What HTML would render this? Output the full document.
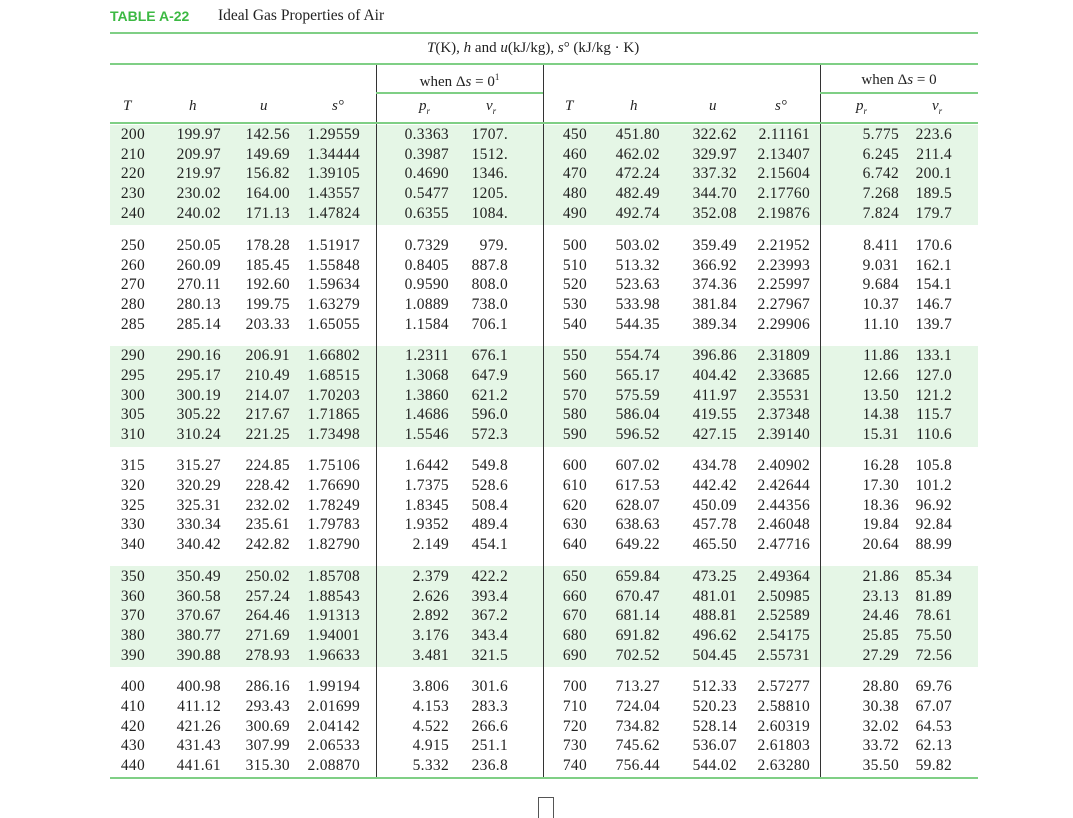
<!DOCTYPE html>
<html><head><meta charset="utf-8"><style>
body{margin:0;width:1073px;height:815px;background:#fff;position:relative;overflow:hidden;font-family:"Liberation Serif",serif;color:#222}
.abs{position:absolute}
.hl{position:absolute;height:2px;background:#7fcf85}
.vl{position:absolute;width:1px;background:#333;top:65px;height:714px}
.band{position:absolute;left:110px;width:868px;background:#e5f6e6}
.r{position:absolute;left:0;width:1073px;height:20px;font-size:15.5px;line-height:20px;letter-spacing:0.3px}
.r span{position:absolute;text-align:right;width:90px}
.h{font-style:italic;font-size:15px;position:absolute;top:98px}
</style></head><body>
<div class="abs" style="left:110px;top:8px;font-family:'Liberation Sans',sans-serif;font-weight:bold;color:#3cb943;font-size:14px;">TABLE A-22</div>
<div class="abs" style="left:218px;top:7px;font-size:15.5px;">Ideal Gas Properties of Air</div>
<div class="hl" style="left:110px;width:868px;top:32px"></div>
<div class="abs" style="left:427px;top:40px;font-size:15px;"><i>T</i>(K), <i>h</i> and <i>u</i>(kJ/kg), <i>s</i>° (kJ/kg · K)</div>
<div class="hl" style="left:110px;width:868px;top:63px"></div>
<div class="band" style="top:125px;height:100px"></div>
<div class="band" style="top:346px;height:101px"></div>
<div class="band" style="top:566px;height:101px"></div>
<div class="vl" style="left:376px"></div>
<div class="vl" style="left:543px"></div>
<div class="vl" style="left:820px"></div>
<div class="abs" style="left:376px;width:167px;text-align:center;top:72px;font-size:15px">when Δ<i>s</i> = 0<sup style="font-size:9px">1</sup></div>
<div class="abs" style="left:820px;width:158px;text-align:center;top:72px;font-size:15px">when Δ<i>s</i> = 0</div>
<div class="hl" style="left:376px;width:167px;top:92px"></div>
<div class="hl" style="left:820px;width:158px;top:92px"></div>
<div class="h" style="left:123px">T</div><div class="h" style="left:189px">h</div><div class="h" style="left:260px">u</div><div class="h" style="left:332px">s°</div>
<div class="h" style="left:419px">p<sub style="font-size:9px">r</sub></div><div class="h" style="left:486px">v<sub style="font-size:9px">r</sub></div>
<div class="h" style="left:565px">T</div><div class="h" style="left:630px">h</div><div class="h" style="left:709px">u</div><div class="h" style="left:775px">s°</div>
<div class="h" style="left:856px">p<sub style="font-size:9px">r</sub></div><div class="h" style="left:932px">v<sub style="font-size:9px">r</sub></div>
<div class="hl" style="left:110px;width:868px;top:122px"></div>
<div class="hl" style="left:110px;width:868px;top:777px"></div>
<div class="abs" style="left:538px;top:797px;width:14px;height:20px;border:1px solid #555;border-bottom:none"></div>
<style>
.r span:nth-child(1){left:55px}.r span:nth-child(2){left:131px}.r span:nth-child(3){left:200px}.r span:nth-child(4){left:270px}
.r span:nth-child(5){left:359px}.r span:nth-child(6){left:418px}.r span:nth-child(7){left:497px}.r span:nth-child(8){left:570px}
.r span:nth-child(9){left:647px}.r span:nth-child(10){left:720px}.r span:nth-child(11){left:809px}.r span:nth-child(12){left:862px}
</style>
<div class="r" style="top:125px"><span>200</span><span>199.97</span><span>142.56</span><span>1.29559</span><span>0.3363</span><span>1707.</span><span>450</span><span>451.80</span><span>322.62</span><span>2.11161</span><span>5.775</span><span>223.6</span></div>
<div class="r" style="top:145px"><span>210</span><span>209.97</span><span>149.69</span><span>1.34444</span><span>0.3987</span><span>1512.</span><span>460</span><span>462.02</span><span>329.97</span><span>2.13407</span><span>6.245</span><span>211.4</span></div>
<div class="r" style="top:164px"><span>220</span><span>219.97</span><span>156.82</span><span>1.39105</span><span>0.4690</span><span>1346.</span><span>470</span><span>472.24</span><span>337.32</span><span>2.15604</span><span>6.742</span><span>200.1</span></div>
<div class="r" style="top:184px"><span>230</span><span>230.02</span><span>164.00</span><span>1.43557</span><span>0.5477</span><span>1205.</span><span>480</span><span>482.49</span><span>344.70</span><span>2.17760</span><span>7.268</span><span>189.5</span></div>
<div class="r" style="top:204px"><span>240</span><span>240.02</span><span>171.13</span><span>1.47824</span><span>0.6355</span><span>1084.</span><span>490</span><span>492.74</span><span>352.08</span><span>2.19876</span><span>7.824</span><span>179.7</span></div>

<div class="r" style="top:236px"><span>250</span><span>250.05</span><span>178.28</span><span>1.51917</span><span>0.7329</span><span>979.</span><span>500</span><span>503.02</span><span>359.49</span><span>2.21952</span><span>8.411</span><span>170.6</span></div>
<div class="r" style="top:256px"><span>260</span><span>260.09</span><span>185.45</span><span>1.55848</span><span>0.8405</span><span>887.8</span><span>510</span><span>513.32</span><span>366.92</span><span>2.23993</span><span>9.031</span><span>162.1</span></div>
<div class="r" style="top:275px"><span>270</span><span>270.11</span><span>192.60</span><span>1.59634</span><span>0.9590</span><span>808.0</span><span>520</span><span>523.63</span><span>374.36</span><span>2.25997</span><span>9.684</span><span>154.1</span></div>
<div class="r" style="top:295px"><span>280</span><span>280.13</span><span>199.75</span><span>1.63279</span><span>1.0889</span><span>738.0</span><span>530</span><span>533.98</span><span>381.84</span><span>2.27967</span><span>10.37</span><span>146.7</span></div>
<div class="r" style="top:315px"><span>285</span><span>285.14</span><span>203.33</span><span>1.65055</span><span>1.1584</span><span>706.1</span><span>540</span><span>544.35</span><span>389.34</span><span>2.29906</span><span>11.10</span><span>139.7</span></div>

<div class="r" style="top:346px"><span>290</span><span>290.16</span><span>206.91</span><span>1.66802</span><span>1.2311</span><span>676.1</span><span>550</span><span>554.74</span><span>396.86</span><span>2.31809</span><span>11.86</span><span>133.1</span></div>
<div class="r" style="top:366px"><span>295</span><span>295.17</span><span>210.49</span><span>1.68515</span><span>1.3068</span><span>647.9</span><span>560</span><span>565.17</span><span>404.42</span><span>2.33685</span><span>12.66</span><span>127.0</span></div>
<div class="r" style="top:386px"><span>300</span><span>300.19</span><span>214.07</span><span>1.70203</span><span>1.3860</span><span>621.2</span><span>570</span><span>575.59</span><span>411.97</span><span>2.35531</span><span>13.50</span><span>121.2</span></div>
<div class="r" style="top:405px"><span>305</span><span>305.22</span><span>217.67</span><span>1.71865</span><span>1.4686</span><span>596.0</span><span>580</span><span>586.04</span><span>419.55</span><span>2.37348</span><span>14.38</span><span>115.7</span></div>
<div class="r" style="top:425px"><span>310</span><span>310.24</span><span>221.25</span><span>1.73498</span><span>1.5546</span><span>572.3</span><span>590</span><span>596.52</span><span>427.15</span><span>2.39140</span><span>15.31</span><span>110.6</span></div>

<div class="r" style="top:456px"><span>315</span><span>315.27</span><span>224.85</span><span>1.75106</span><span>1.6442</span><span>549.8</span><span>600</span><span>607.02</span><span>434.78</span><span>2.40902</span><span>16.28</span><span>105.8</span></div>
<div class="r" style="top:476px"><span>320</span><span>320.29</span><span>228.42</span><span>1.76690</span><span>1.7375</span><span>528.6</span><span>610</span><span>617.53</span><span>442.42</span><span>2.42644</span><span>17.30</span><span>101.2</span></div>
<div class="r" style="top:496px"><span>325</span><span>325.31</span><span>232.02</span><span>1.78249</span><span>1.8345</span><span>508.4</span><span>620</span><span>628.07</span><span>450.09</span><span>2.44356</span><span>18.36</span><span>96.92</span></div>
<div class="r" style="top:515px"><span>330</span><span>330.34</span><span>235.61</span><span>1.79783</span><span>1.9352</span><span>489.4</span><span>630</span><span>638.63</span><span>457.78</span><span>2.46048</span><span>19.84</span><span>92.84</span></div>
<div class="r" style="top:535px"><span>340</span><span>340.42</span><span>242.82</span><span>1.82790</span><span>2.149</span><span>454.1</span><span>640</span><span>649.22</span><span>465.50</span><span>2.47716</span><span>20.64</span><span>88.99</span></div>

<div class="r" style="top:567px"><span>350</span><span>350.49</span><span>250.02</span><span>1.85708</span><span>2.379</span><span>422.2</span><span>650</span><span>659.84</span><span>473.25</span><span>2.49364</span><span>21.86</span><span>85.34</span></div>
<div class="r" style="top:587px"><span>360</span><span>360.58</span><span>257.24</span><span>1.88543</span><span>2.626</span><span>393.4</span><span>660</span><span>670.47</span><span>481.01</span><span>2.50985</span><span>23.13</span><span>81.89</span></div>
<div class="r" style="top:606px"><span>370</span><span>370.67</span><span>264.46</span><span>1.91313</span><span>2.892</span><span>367.2</span><span>670</span><span>681.14</span><span>488.81</span><span>2.52589</span><span>24.46</span><span>78.61</span></div>
<div class="r" style="top:626px"><span>380</span><span>380.77</span><span>271.69</span><span>1.94001</span><span>3.176</span><span>343.4</span><span>680</span><span>691.82</span><span>496.62</span><span>2.54175</span><span>25.85</span><span>75.50</span></div>
<div class="r" style="top:646px"><span>390</span><span>390.88</span><span>278.93</span><span>1.96633</span><span>3.481</span><span>321.5</span><span>690</span><span>702.52</span><span>504.45</span><span>2.55731</span><span>27.29</span><span>72.56</span></div>

<div class="r" style="top:677px"><span>400</span><span>400.98</span><span>286.16</span><span>1.99194</span><span>3.806</span><span>301.6</span><span>700</span><span>713.27</span><span>512.33</span><span>2.57277</span><span>28.80</span><span>69.76</span></div>
<div class="r" style="top:697px"><span>410</span><span>411.12</span><span>293.43</span><span>2.01699</span><span>4.153</span><span>283.3</span><span>710</span><span>724.04</span><span>520.23</span><span>2.58810</span><span>30.38</span><span>67.07</span></div>
<div class="r" style="top:717px"><span>420</span><span>421.26</span><span>300.69</span><span>2.04142</span><span>4.522</span><span>266.6</span><span>720</span><span>734.82</span><span>528.14</span><span>2.60319</span><span>32.02</span><span>64.53</span></div>
<div class="r" style="top:736px"><span>430</span><span>431.43</span><span>307.99</span><span>2.06533</span><span>4.915</span><span>251.1</span><span>730</span><span>745.62</span><span>536.07</span><span>2.61803</span><span>33.72</span><span>62.13</span></div>
<div class="r" style="top:756px"><span>440</span><span>441.61</span><span>315.30</span><span>2.08870</span><span>5.332</span><span>236.8</span><span>740</span><span>756.44</span><span>544.02</span><span>2.63280</span><span>35.50</span><span>59.82</span></div>
</body></html>
